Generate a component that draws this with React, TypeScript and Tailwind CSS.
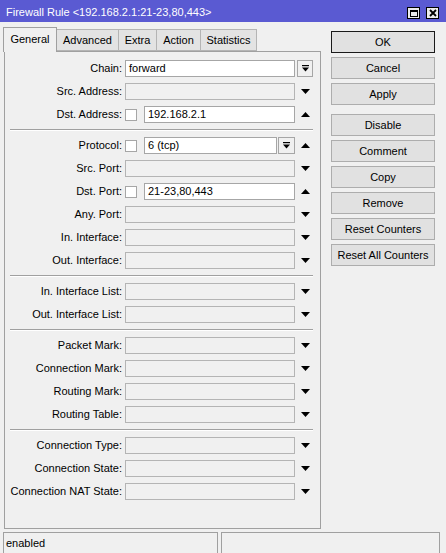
import React from "react";

type Arrow = "down" | "up" | "chain";
type Row = {
  label: string;
  check?: boolean;
  value?: string;
  enabled?: boolean;
  proto?: boolean;
  arrow: Arrow;
};

const groups: Row[][] = [
  [
    { label: "Chain:", value: "forward", enabled: true, arrow: "chain" },
    { label: "Src. Address:", arrow: "down" },
    { label: "Dst. Address:", check: true, value: "192.168.2.1", enabled: true, arrow: "up" },
  ],
  [
    { label: "Protocol:", check: true, value: "6 (tcp)", enabled: true, proto: true, arrow: "up" },
    { label: "Src. Port:", arrow: "down" },
    { label: "Dst. Port:", check: true, value: "21-23,80,443", enabled: true, arrow: "up" },
    { label: "Any. Port:", arrow: "down" },
    { label: "In. Interface:", arrow: "down" },
    { label: "Out. Interface:", arrow: "down" },
  ],
  [
    { label: "In. Interface List:", arrow: "down" },
    { label: "Out. Interface List:", arrow: "down" },
  ],
  [
    { label: "Packet Mark:", arrow: "down" },
    { label: "Connection Mark:", arrow: "down" },
    { label: "Routing Mark:", arrow: "down" },
    { label: "Routing Table:", arrow: "down" },
  ],
  [
    { label: "Connection Type:", arrow: "down" },
    { label: "Connection State:", arrow: "down" },
    { label: "Connection NAT State:", arrow: "down" },
  ],
];

function DropIcon() {
  return (
    <svg width="7" height="7" viewBox="0 0 7 7">
      <rect x="0" y="0" width="7" height="1.2" fill="#000" />
      <polygon points="0,2.5 7,2.5 3.5,6.5" fill="#000" />
    </svg>
  );
}

function Tri({ up }: { up?: boolean }) {
  return (
    <svg width="9" height="5" viewBox="0 0 9 5">
      <polygon points={up ? "0,5 9,5 4.5,0" : "0,0 9,0 4.5,5"} fill="#000" />
    </svg>
  );
}

function Field({ row }: { row: Row }) {
  const box = row.enabled
    ? "bg-white border-[#a6a6a6]"
    : "bg-[#f0f0f0] border-[#b4b4b4]";
  return (
    <div className="flex items-center h-[17px]">
      <div className="w-[117px] text-right whitespace-nowrap leading-[17px]">{row.label}</div>
      <div className="ml-[3px] flex items-center w-[170px] h-[17px]">
        {row.check && (
          <>
            <div className="w-[12px] h-[12px] bg-white border border-[#a6a6a6] shrink-0" />
            <div className="w-[7px] shrink-0" />
          </>
        )}
        <div className={`flex-1 h-[17px] border ${box} pl-[3px] leading-[15px] whitespace-nowrap`}>
          {row.value ?? ""}
        </div>
        {row.proto && (
          <div className="w-[17px] h-[17px] border border-[#a6a6a6] bg-[#f0f0f0] flex items-center justify-center ml-px shrink-0">
            <DropIcon />
          </div>
        )}
      </div>
      <div className="w-[18px] h-[17px] flex items-center justify-center">
        {row.arrow === "chain" ? (
          <div className="w-[17px] h-[17px] border border-[#a6a6a6] bg-[#f0f0f0] flex items-center justify-center ml-[2px]">
            <DropIcon />
          </div>
        ) : (
          <div className="ml-[2px] flex">
            <Tri up={row.arrow === "up"} />
          </div>
        )}
      </div>
    </div>
  );
}

const tabs = [
  { name: "General", w: "w-[54px]", active: true },
  { name: "Advanced", w: "w-[62px]" },
  { name: "Extra", w: "w-[38px]" },
  { name: "Action", w: "w-[44px]" },
  { name: "Statistics", w: "w-[56px]" },
];

const buttonsTop = ["OK", "Cancel", "Apply"];
const buttonsBottom = ["Disable", "Comment", "Copy", "Remove", "Reset Counters", "Reset All Counters"];

function Btn({ label, def }: { label: string; def?: boolean }) {
  return (
    <div
      className={`h-[22px] w-[104px] flex items-center justify-center bg-[#e1e1e1] border ${
        def ? "border-[#1a1a1a]" : "border-[#adadad]"
      }`}
    >
      {label}
    </div>
  );
}

export default function App() {
  return (
    <div
      className="w-[446px] h-[553px] bg-[#f0f0f0] flex flex-col text-[11px] text-black overflow-hidden"
      style={{ fontFamily: '"Liberation Sans", Arial, sans-serif' }}
    >
      {/* Title bar */}
      <div className="h-[22px] bg-[#5a5ad2] flex items-center pl-[6px] pr-[7px] text-white shrink-0">
        <div className="flex-1 whitespace-nowrap leading-[22px] pt-[1px]">
          Firewall Rule &lt;192.168.2.1:21-23,80,443&gt;
        </div>
        <div className="flex items-center gap-[6px] mt-[4px]">
          <div className="w-[13px] h-[12px] bg-[#ececec] border border-black flex items-center justify-center">
            <div className="w-[8px] h-[7px] border border-black border-t-2" />
          </div>
          <div className="w-[13px] h-[12px] bg-[#ececec] border border-black flex items-center justify-center">
            <svg width="8" height="8" viewBox="0 0 8 8">
              <path d="M1 1 L7 7 M7 1 L1 7" stroke="#000" strokeWidth="1.8" />
            </svg>
          </div>
        </div>
      </div>

      {/* Body */}
      <div className="flex-1 flex pb-[3px]">
        {/* Left column */}
        <div className="w-[321px] pl-[3px] pt-[4px] flex flex-col">
          <div className="flex items-end h-[25px] relative z-10">
            {tabs.map((t) =>
              t.active ? (
                <div
                  key={t.name}
                  className={`${t.w} h-[25px] mb-[-1px] bg-[#f0f0f0] border border-b-0 border-[#a0a0a0] flex items-center justify-center pb-[2px]`}
                >
                  {t.name}
                </div>
              ) : (
                <div
                  key={t.name}
                  className={`${t.w} h-[22px] bg-[#e3e3e3] border border-l-0 border-[#b4b4b4] flex items-center justify-center`}
                >
                  {t.name}
                </div>
              )
            )}
          </div>
          <div className="ml-[1px] flex-1 border border-[#a0a0a0] pt-[8px] flex flex-col gap-[6px]">
            {groups.map((g, gi) => (
              <React.Fragment key={gi}>
                {gi > 0 && (
                  <div className="ml-[5px] w-[303px] h-[2px] border-t border-[#a0a0a0] border-b border-b-white" />
                )}
                {g.map((r) => (
                  <Field key={r.label} row={r} />
                ))}
              </React.Fragment>
            ))}
          </div>
        </div>

        {/* Right column */}
        <div className="ml-[10px] pt-[9px] flex flex-col">
          <div className="flex flex-col gap-[4px]">
            {buttonsTop.map((b, i) => (
              <Btn key={b} label={b} def={i === 0} />
            ))}
          </div>
          <div className="flex flex-col gap-[4px] mt-[9px]">
            {buttonsBottom.map((b) => (
              <Btn key={b} label={b} />
            ))}
          </div>
        </div>
      </div>

      {/* Status bar */}
      <div className="h-[21px] flex gap-[3px] pl-[3px] pr-[6px] shrink-0">
        <div className="w-[215px] border-t border-l border-r border-[#a0a0a0] pl-[2px] flex items-center">
          enabled
        </div>
        <div className="flex-1 border-t border-l border-r border-[#a0a0a0]" />
      </div>
    </div>
  );
}
